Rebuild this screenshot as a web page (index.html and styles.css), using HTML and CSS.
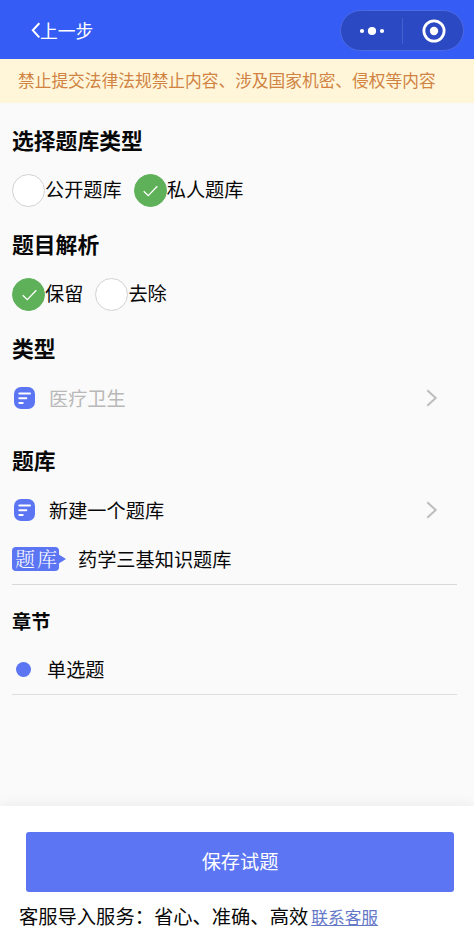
FILE: index.html
```html
<!DOCTYPE html>
<html lang="zh-CN">
<head>
<meta charset="utf-8">
<meta name="viewport" content="width=device-width, initial-scale=1">
<title>保存试题</title>
<link rel="stylesheet" href="styles.css">
</head>
<body>
<header class="navbar">
  <a class="back">
    <svg width="9" height="17" viewBox="0 0 9 17"><path d="M8.3 1.2 1.8 8.2 8.3 15.4" fill="none" stroke="#fff" stroke-width="2"/></svg>
    <span>上一步</span>
  </a>
  <div class="capsule">
    <svg width="26" height="10" viewBox="0 0 26 10" fill="#fff"><circle cx="3" cy="5" r="2.1"/><circle cx="13" cy="5" r="4.1"/><circle cx="23" cy="5" r="2.1"/></svg>
    <span class="divider"></span>
    <svg width="24" height="24" viewBox="0 0 24 24"><circle cx="12" cy="12" r="10.1" fill="none" stroke="#fff" stroke-width="2.8"/><circle cx="12" cy="12" r="4.2" fill="#fff"/></svg>
  </div>
</header>
<p class="notice">禁止提交法律法规禁止内容、涉及国家机密、侵权等内容</p>
<main class="content">
  <h2 class="title">选择题库类型</h2>
  <div class="options">
    <span class="option"><i class="radio"></i><span class="label">公开题库</span></span>
    <span class="option"><i class="radio checked"><svg width="15" height="12" viewBox="0 0 15 12"><path d="M.7 6.2 5.3 10.6 14.3 1.2" fill="none" stroke="#fff" stroke-width="1.3"/></svg></i><span class="label">私人题库</span></span>
  </div>
  <h2 class="title">题目解析</h2>
  <div class="options">
    <span class="option"><i class="radio checked"><svg width="15" height="12" viewBox="0 0 15 12"><path d="M.7 6.2 5.3 10.6 14.3 1.2" fill="none" stroke="#fff" stroke-width="1.3"/></svg></i><span class="label">保留</span></span>
    <span class="option"><i class="radio"></i><span class="label">去除</span></span>
  </div>
  <h2 class="title">类型</h2>
  <div class="row placeholder">
    <svg class="doc" width="21" height="22" viewBox="0 0 21 22"><rect width="21" height="22" rx="7" fill="#5b75f3"/><path d="M5.3 6.6H16M5.3 11.3H12.3M5.3 16H8.7" stroke="#fff" stroke-width="2" stroke-linecap="round"/></svg>
    <span>医疗卫生</span>
    <svg class="arrow" width="12" height="18" viewBox="0 0 12 18"><path d="M1.3 1.2 9.7 9 1.3 16.8" fill="none" stroke="#bdbdbd" stroke-width="2"/></svg>
  </div>
  <h2 class="title bank">题库</h2>
  <div class="row">
    <svg class="doc" width="21" height="22" viewBox="0 0 21 22"><rect width="21" height="22" rx="7" fill="#5b75f3"/><path d="M5.3 6.6H16M5.3 11.3H12.3M5.3 16H8.7" stroke="#fff" stroke-width="2" stroke-linecap="round"/></svg>
    <span>新建一个题库</span>
    <svg class="arrow" width="12" height="18" viewBox="0 0 12 18"><path d="M1.3 1.2 9.7 9 1.3 16.8" fill="none" stroke="#bdbdbd" stroke-width="2"/></svg>
  </div>
  <div class="selected">
    <span class="tag">题库</span>
    <span>药学三基知识题库</span>
  </div>
  <h3 class="subtitle">章节</h3>
  <div class="chapter"><i class="dot"></i><span class="name">单选题</span></div>
</main>
<footer class="footer">
  <button class="save">保存试题</button>
  <p class="service">客服导入服务：省心、准确、高效<a class="link">联系客服</a></p>
</footer>
</body>
</html>
```

FILE: styles.css
```css
* { box-sizing: border-box; }

body {
  margin: 0;
  height: 951px;
  display: flex;
  flex-direction: column;
  overflow: hidden;
  background: #fafafa;
  color: #080808;
  font: 19.2px/28px "Noto Sans CJK SC", sans-serif;
}

h2, h3, p { margin: 0; }
svg { display: block; flex: none; }

.navbar {
  height: 59px;
  flex: none;
  display: flex;
  align-items: center;
  justify-content: space-between;
  padding: 2px 10px 0 31px;
  background: #355df5;
}

.back {
  display: flex;
  align-items: center;
  color: #fff;
  font-size: 17.8px;
}

.back span { padding-bottom: 2px; }

.capsule {
  width: 124px;
  height: 41px;
  display: flex;
  align-items: center;
  padding: 0 17px 0 18px;
  border: 1px solid #4d6ae3;
  border-radius: 21px;
  background: #2c49c4;
}

.divider {
  width: 1px;
  height: 26px;
  margin: 0 19px 0 17px;
  background: #4660cf;
}

.notice {
  height: 44px;
  flex: none;
  padding-left: 18px;
  background: #fff6d9;
  color: #d08343;
  font-size: 16.72px;
  line-height: 43px;
  white-space: nowrap;
}

.content {
  flex: 1;
  padding: 21px 17px 0 12px;
}

.title {
  height: 32px;
  font-size: 21.8px;
  line-height: 31px;
  font-weight: 700;
}

.options {
  height: 34px;
  margin: 17px 0 21px;
  display: flex;
  gap: 12px;
}

.option {
  display: flex;
  align-items: center;
}

.label { padding-bottom: 2px; }

.radio {
  width: 33px;
  height: 33px;
  display: flex;
  align-items: center;
  justify-content: center;
  border: 1px solid #d2d2d2;
  border-radius: 50%;
  background: #fff;
}

.checked {
  padding: 2px 0 0 1px;
  border-color: #5eb159;
  background: #5eb159;
}

.row {
  height: 34px;
  margin-top: 17px;
  padding: 0 19px 0 2px;
  display: flex;
  align-items: center;
}

.doc { margin-right: 14px; }
.arrow { margin-left: auto; }
.placeholder { color: #b8b8b8; }
.bank { margin-top: 29px; }

.selected {
  height: 58px;
  padding-top: 7px;
  display: flex;
  align-items: center;
  border-bottom: 1px solid #d9d9d9;
}

.tag {
  position: relative;
  width: 47px;
  height: 24px;
  margin-right: 19px;
  padding-left: 3px;
  border-radius: 4px;
  background: #5b75f3;
  color: #fff;
  font: 300 20px/23px "Noto Serif CJK SC", "Noto Sans CJK SC", serif;
  letter-spacing: 2px;
  white-space: nowrap;
}

.tag::after {
  content: "";
  position: absolute;
  left: 46px;
  top: 7px;
  border: solid transparent;
  border-width: 5px 0 5px 8px;
  border-left-color: #5b75f3;
}

.subtitle {
  margin-top: 22px;
  font-size: 19.2px;
  font-weight: 700;
}

.chapter {
  height: 60px;
  padding: 10px 0 0 4px;
  display: flex;
  align-items: center;
  border-bottom: 1px solid #dedede;
}

.name { padding-bottom: 2px; }

.dot {
  width: 15px;
  height: 15px;
  margin-right: 16px;
  border-radius: 50%;
  background: #5b75f3;
}

.footer {
  height: 145px;
  flex: none;
  padding: 26px 20px 0 26px;
  background: #fff;
  box-shadow: 0 -2px 12px rgba(0, 0, 0, .06);
}

.save {
  display: block;
  width: 100%;
  height: 60px;
  padding: 0 0 2px;
  border: 0;
  border-radius: 3px;
  background: #5b75f3;
  color: #fff;
  font: inherit;
}

.service {
  margin: 10px 0 0 -7px;
  font-size: 19.3px;
  white-space: nowrap;
}

.link {
  margin-left: 3px;
  color: #6578c8;
  font-size: 16.7px;
  text-decoration: underline;
}
```
